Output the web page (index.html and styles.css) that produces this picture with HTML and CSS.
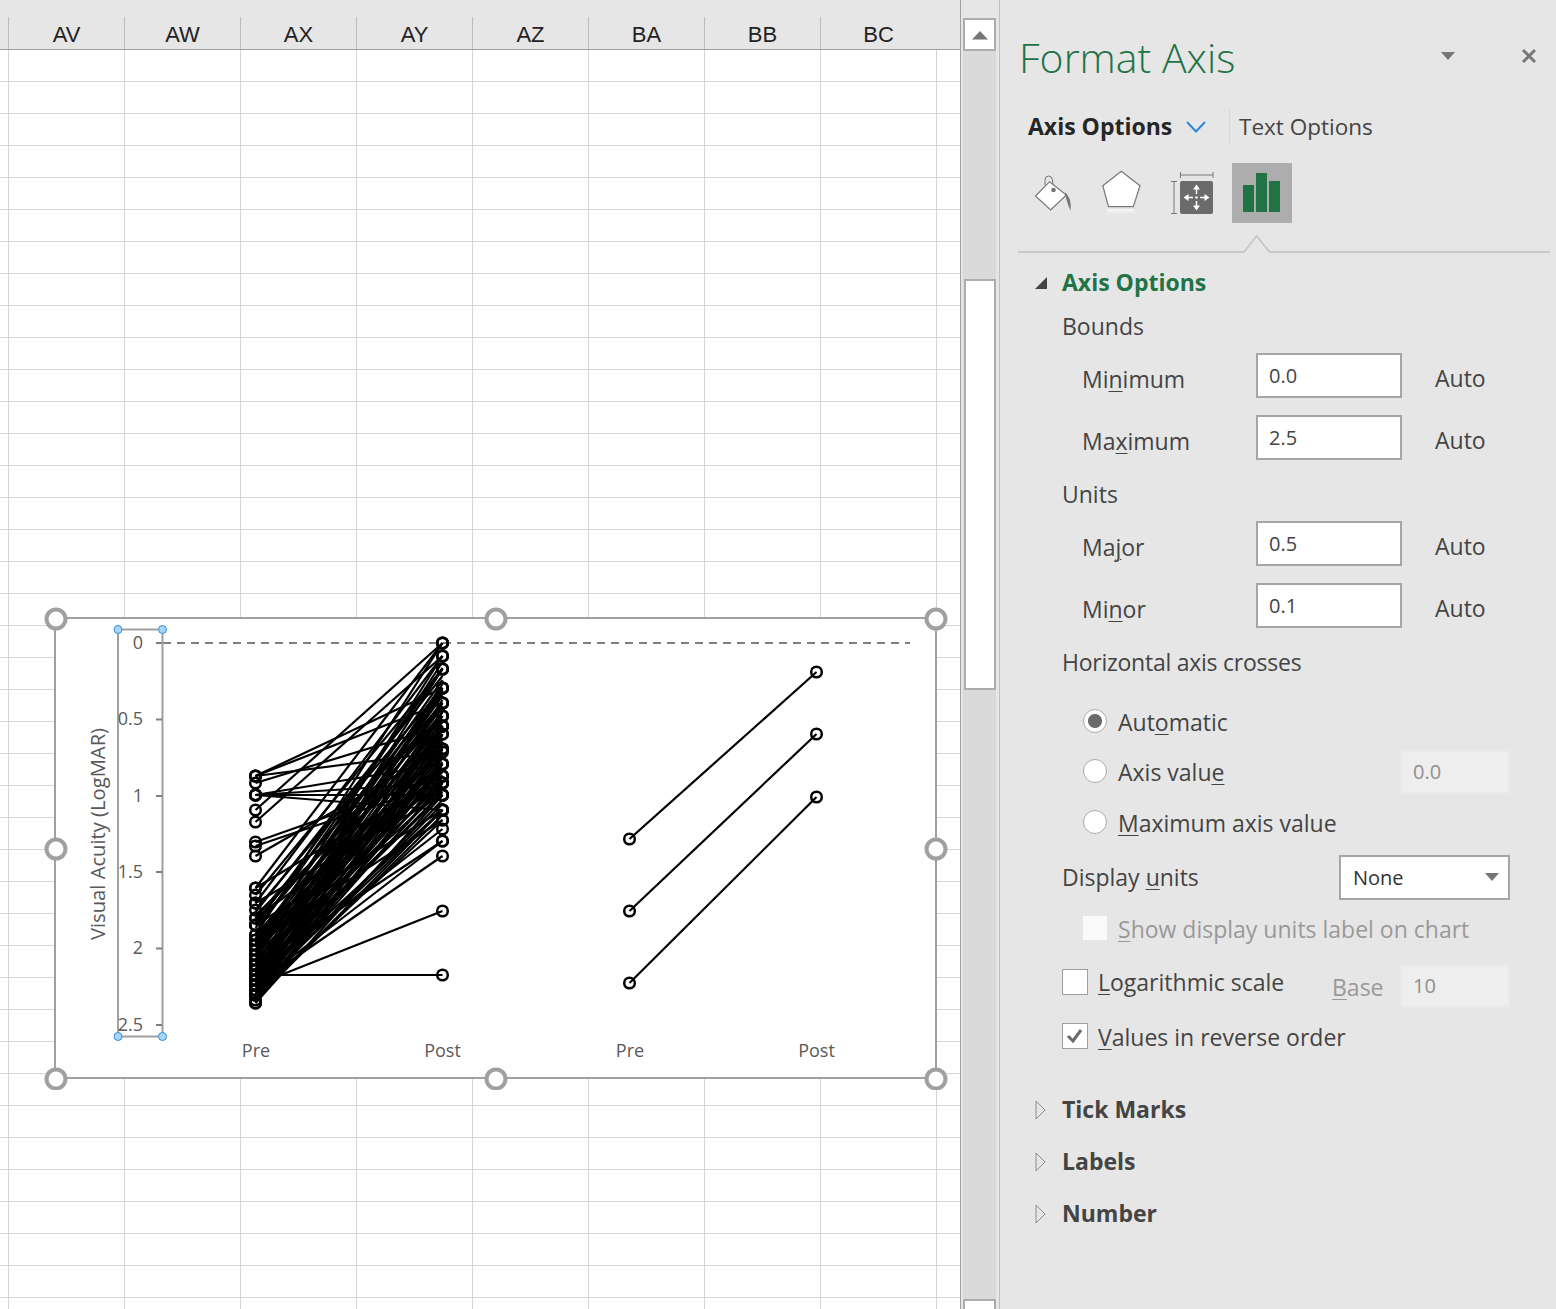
FILE: index.html
```html
<!DOCTYPE html>
<html lang="en">
<head>
<meta charset="utf-8">
<title>Format Axis</title>
<link rel="stylesheet" href="styles.css">
</head>
<body>
<main class="sheet">
  <div class="colhead">
    <div class="col">AV</div><div class="col">AW</div><div class="col">AX</div><div class="col">AY</div><div class="col">AZ</div><div class="col">BA</div><div class="col">BB</div><div class="col">BC</div>
  </div>
  <div class="cells"></div>
  <svg class="chart" width="920" height="490" viewBox="40 600 920 490">
    <defs>
      <marker id="dot" viewBox="0 0 16 16" refX="8" refY="8" markerWidth="16" markerHeight="16" markerUnits="userSpaceOnUse"><circle cx="8" cy="8" r="5.300" fill="none" stroke="#000" stroke-width="2.500"/></marker>
    </defs>
    <rect class="frame" x="55" y="618" width="881" height="460"/>
    <path class="gridline" d="M163 643H910"/>
    <path class="axisbox" d="M118 1036.500V629.500H162.500V1036.500H118"/>
    <path class="ticks" d="M156 643h6M156 719.500h6M156 796h6M156 872h6M156 948.500h6M156 1025h6"/>
    <text class="tick" x="143" y="649">0</text>
    <text class="tick" x="143" y="725">0.5</text>
    <text class="tick" x="143" y="802">1</text>
    <text class="tick" x="143" y="878">1.5</text>
    <text class="tick" x="143" y="954">2</text>
    <text class="tick" x="143" y="1031">2.5</text>
    <text class="axistitle" transform="translate(105 834) rotate(-90)">Visual Acuity (LogMAR)</text>
    <text class="cat" x="256" y="1057">Pre</text>
    <text class="cat" x="442.500" y="1057">Post</text>
    <text class="cat" x="630" y="1057">Pre</text>
    <text class="cat" x="816.500" y="1057">Post</text>
    <g class="series">
      <path d="M255.500 912L442.500 676"/><path d="M255.500 922L442.500 694"/><path d="M255.500 928L442.500 708"/><path d="M255.500 933L442.500 668"/><path d="M255.500 938L442.500 712"/><path d="M255.500 943L442.500 680"/><path d="M255.500 946L442.500 722"/><path d="M255.500 952L442.500 696"/><path d="M255.500 954L442.500 742"/><path d="M255.500 957L442.500 684"/><path d="M255.500 962L442.500 730"/><path d="M255.500 963L442.500 706"/><path d="M255.500 966L442.500 756"/><path d="M255.500 969L442.500 690"/><path d="M255.500 972L442.500 744"/><path d="M255.500 974L442.500 712"/><path d="M255.500 977L442.500 770"/><path d="M255.500 979L442.500 700"/><path d="M255.500 982L442.500 738"/><path d="M255.500 984L442.500 720"/><path d="M255.500 986L442.500 786"/><path d="M255.500 987L442.500 730"/><path d="M255.500 989L442.500 758"/><path d="M255.500 992L442.500 742"/><path d="M255.500 993L442.500 800"/><path d="M255.500 996L442.500 768"/><path d="M255.500 997L442.500 735"/><path d="M255.500 1001L442.500 752"/><path d="M255.500 936L442.500 762"/><path d="M255.500 942L442.500 748"/><path d="M255.500 951L442.500 768"/><path d="M255.500 959L442.500 790"/><path d="M255.500 964L442.500 772"/><path d="M255.500 973L442.500 780"/><path d="M255.500 981L442.500 792"/><path d="M255.500 991L442.500 804"/><path d="M255.500 999L442.500 815"/><path d="M255.500 915L442.500 740"/><path d="M255.500 947L442.500 662"/><path d="M255.500 983L442.500 690"/>
    </g>
    <g class="series" marker-start="url(#dot)" marker-end="url(#dot)">
      <path d="M629.500 839L816.500 672"/><path d="M629.500 911L816.500 734"/><path d="M629.500 983L816.500 797"/>
      <path d="M255.500 776L442.500 688"/><path d="M255.500 776L442.500 703"/><path d="M255.500 783L442.500 726"/><path d="M255.500 776L442.500 752"/><path d="M255.500 795L442.500 783"/><path d="M255.500 795L442.500 795"/><path d="M255.500 795L442.500 764"/><path d="M255.500 795L442.500 810"/><path d="M255.500 810L442.500 643"/><path d="M255.500 822L442.500 656"/><path d="M255.500 842L442.500 776"/><path d="M255.500 846L442.500 783"/><path d="M255.500 856L442.500 749"/>
      <path d="M255.500 888L442.500 643"/><path d="M255.500 888L442.500 776"/><path d="M255.500 895L442.500 669"/><path d="M255.500 903L442.500 656"/><path d="M255.500 903L442.500 795"/><path d="M255.500 910L442.500 688"/><path d="M255.500 918L442.500 703"/><path d="M255.500 918L442.500 783"/><path d="M255.500 925L442.500 716"/><path d="M255.500 925L442.500 669"/><path d="M255.500 925L442.500 810"/><path d="M255.500 935L442.500 643"/><path d="M255.500 935L442.500 726"/><path d="M255.500 940L442.500 688"/><path d="M255.500 940L442.500 820"/><path d="M255.500 945L442.500 703"/><path d="M255.500 945L442.500 764"/><path d="M255.500 950L442.500 656"/><path d="M255.500 950L442.500 734"/><path d="M255.500 955L442.500 716"/><path d="M255.500 955L442.500 776"/><path d="M255.500 960L442.500 669"/><path d="M255.500 960L442.500 749"/><path d="M255.500 965L442.500 688"/><path d="M255.500 965L442.500 783"/><path d="M255.500 965L442.500 841"/><path d="M255.500 970L442.500 703"/><path d="M255.500 970L442.500 726"/><path d="M255.500 970L442.500 795"/><path d="M255.500 975L442.500 734"/><path d="M255.500 975L442.500 795"/><path d="M255.500 975L442.500 975"/><path d="M255.500 975L442.500 829"/><path d="M255.500 980L442.500 716"/><path d="M255.500 980L442.500 764"/><path d="M255.500 980L442.500 810"/><path d="M255.500 985L442.500 911"/><path d="M255.500 985L442.500 749"/><path d="M255.500 985L442.500 856"/><path d="M255.500 985L442.500 841"/><path d="M255.500 990L442.500 776"/><path d="M255.500 990L442.500 810"/><path d="M255.500 990L442.500 726"/><path d="M255.500 995L442.500 783"/><path d="M255.500 995L442.500 820"/><path d="M255.500 995L442.500 749"/><path d="M255.500 1003L442.500 795"/><path d="M255.500 1003L442.500 764"/><path d="M255.500 1000L442.500 810"/>
    </g>
    <g class="handles">
      <circle cx="56" cy="619" r="9.500"/><circle cx="496" cy="619" r="9.500"/><circle cx="936" cy="619" r="9.500"/>
      <circle cx="56" cy="849" r="9.500"/><circle cx="936" cy="849" r="9.500"/>
      <circle cx="56" cy="1079" r="9.500"/><circle cx="496" cy="1079" r="9.500"/><circle cx="936" cy="1079" r="9.500"/>
    </g>
    <g class="miniHandles">
      <circle cx="118" cy="629.500" r="4"/><circle cx="162.500" cy="629.500" r="4"/><circle cx="118" cy="1036.500" r="4"/><circle cx="162.500" cy="1036.500" r="4"/>
    </g>
  </svg>
</main>

<div class="scrollbar">
  <div class="sb-btn"><svg width="16" height="9" viewBox="0 0 16 9"><path class="fill-gray" d="M8 0L16 8.500H0Z"/></svg></div>
  <div class="sb-thumb"></div>
  <div class="sb-stub"></div>
</div>

<aside class="panel">
  <header class="title-row">
    <h1 class="title">Format Axis</h1>
    <svg class="pane-caret" width="14" height="8" viewBox="0 0 14 8"><path class="fill-gray" d="M0 0H14L7 8Z"/></svg>
    <svg class="pane-close" width="16" height="16" viewBox="0 0 16 16"><path d="M2 2L14 14M14 2L2 14"/></svg>
  </header>

  <nav class="tabs">
    <span class="tab-active">Axis Options</span>
    <svg class="chevron" width="20" height="12" viewBox="0 0 20 12"><path d="M1 1L10 10.500L19 1"/></svg>
    <span class="tab-sep"></span>
    <span class="tab">Text Options</span>
  </nav>

  <div class="icons">
    <svg class="icon-cell" width="60" height="60" viewBox="1020 163 60 60">
      <path class="ic-handle" d="M1045 185V180Q1045 176 1048.500 176Q1052 176 1052.500 180L1053.500 190"/>
      <path class="ic-shape" d="M1035.500 196L1049.600 181.700L1066.300 195L1050.700 210Z"/>
      <circle class="fill-gray" cx="1053.500" cy="190" r="2.300"/>
      <path class="fill-gray" d="M1065 192Q1072 198 1070.500 211Q1068 205 1066 198Z"/>
    </svg>
    <svg class="icon-cell" width="67" height="60" viewBox="1080 163 67 60">
      <defs><linearGradient id="fade" x1="0" y1="0" x2="0" y2="1"><stop offset="0" stop-color="#d0d0d0"/><stop offset="0.300" stop-color="#f6f6f6"/><stop offset="1" stop-color="#e6e6e6"/></linearGradient></defs>
      <path class="ic-shape" d="M1121.300 171.300L1140 185.700L1133.300 206.700H1108.500L1102.800 185.700Z"/>
      <path class="ic-fade" fill="url(#fade)" d="M1108.500 207.500H1133.300L1136 214H1106Z"/>
    </svg>
    <svg class="icon-cell" width="85" height="60" viewBox="1147 163 85 60">
      <path class="ic-dim" d="M1180.500 172V178M1180.500 175H1213M1213 172V178M1171 181.500H1177M1174 181.500V213.500M1171 213.500H1177"/>
      <rect class="fill-dark" x="1180" y="181" width="33" height="33" rx="2"/>
      <path class="ic-arrows" d="M1196.500 188V194M1196.500 201V207M1187 197.500H1193M1200 197.500H1206"/>
      <circle class="fill-white" cx="1196.500" cy="197.500" r="1.300"/>
      <path class="fill-white" d="M1196.500 184.500L1200 189.500H1193ZM1196.500 210.500L1200 205.500H1193ZM1183.500 197.500L1188.500 194V201ZM1209.500 197.500L1204.500 194V201Z"/>
    </svg>
    <div class="icon-on">
      <svg width="60" height="60" viewBox="1232 163 60 60"><path class="fill-green" d="M1243 185H1254V212H1243ZM1256 173H1267V212H1256ZM1269 181H1280V212H1269Z"/></svg>
    </div>
  </div>

  <svg class="divider" width="556" height="20" viewBox="1000 235 556 20"><path d="M1018 252H1244L1256.700 236L1269.500 252H1550"/></svg>

  <div class="section sec-first">
    <svg class="tri" width="14" height="14" viewBox="0 0 14 14"><path class="fill-tri" d="M1 13L13 1V13Z"/></svg>
    <span class="sec-open">Axis Options</span>
  </div>

  <div class="lbl mt12">Bounds</div>
  <div class="field mt10"><span class="fname">Mi<u>n</u>imum</span><span class="inp">0.0</span><span class="auto">Auto</span></div>
  <div class="field mt17"><span class="fname">Ma<u>x</u>imum</span><span class="inp">2.5</span><span class="auto">Auto</span></div>

  <div class="lbl mt19">Units</div>
  <div class="field mt10"><span class="fname">Ma<u>j</u>or</span><span class="inp">0.5</span><span class="auto">Auto</span></div>
  <div class="field mt17"><span class="fname">Mi<u>n</u>or</span><span class="inp">0.1</span><span class="auto">Auto</span></div>

  <div class="lbl lbl-tight mt19">Horizontal axis crosses</div>

  <div class="opt mt23"><span class="radio radio-on"></span><span class="opt-text">Aut<u>o</u>matic</span></div>
  <div class="opt opt-tall mt8"><span class="radio"></span><span class="opt-text">Axis valu<u>e</u></span><span class="inp-off push">0.0</span></div>
  <div class="opt mt9"><span class="radio"></span><span class="opt-text"><u>M</u>aximum axis value</span></div>

  <div class="duo mt12"><span class="duo-label">Display <u>u</u>nits</span>
    <span class="select">None<svg width="14" height="8" viewBox="0 0 14 8"><path class="fill-gray" d="M0 0H14L7 8Z"/></svg></span>
  </div>

  <div class="opt mt10"><span class="check-off"></span><span class="opt-text muted"><u>S</u>how display units label on chart</span></div>

  <div class="chk chk-tall mt15"><span class="check"></span><span class="chk-text"><u>L</u>ogarithmic scale</span><span class="base"><u>B</u>ase</span><span class="inp-off">10</span></div>
  <div class="chk mt9"><span class="check"><svg width="24" height="24" viewBox="0 0 24 24"><path d="M5 12L10 17L18 6"/></svg></span><span class="chk-text"><u>V</u>alues in reverse order</span></div>

  <div class="section mt37"><svg class="tri" width="14" height="20" viewBox="0 0 14 20"><path class="tri-closed" d="M2 1V19L11 10Z"/></svg><span class="sec-closed">Tick Marks</span></div>
  <div class="section mt20"><svg class="tri" width="14" height="20" viewBox="0 0 14 20"><path class="tri-closed" d="M2 1V19L11 10Z"/></svg><span class="sec-closed">Labels</span></div>
  <div class="section mt20"><svg class="tri" width="14" height="20" viewBox="0 0 14 20"><path class="tri-closed" d="M2 1V19L11 10Z"/></svg><span class="sec-closed">Number</span></div>
</aside>
</body>
</html>
```

FILE: styles.css
```css
* { box-sizing: border-box; }
html, body { margin: 0; height: 100%; }
body {
  width: 1556px; height: 1309px; overflow: hidden;
  display: flex; background: #e6e6e6;
  font-family: "Open Sans", "Noto Sans", sans-serif; color: #444;
}
u { text-underline-offset: 3px; text-decoration-thickness: 1px; }

/* sheet */
.sheet { position: relative; flex: none; width: 961px; height: 100%; display: flex; flex-direction: column; border-right: 1px solid #a0a0a0; }
.colhead { flex: none; height: 50px; display: flex; padding-left: 8px; border-bottom: 1px solid #a0a0a0; background: #e6e6e6; }
.col {
  width: 116px; margin-top: 17px; height: 32px; border-left: 1px solid #bdbdbd;
  font: 22px/36px "Liberation Sans", sans-serif; color: #222; text-align: center;
}
.cells {
  flex: 1; background-color: #fff;
  background-image: linear-gradient(to right, #d4d4d4 1px, transparent 1px), linear-gradient(to bottom, #d4d4d4 1px, transparent 1px);
  background-size: 116px 32px;
  background-position: 8px 31px;
}
.chart { position: absolute; left: 40px; top: 600px; }
.frame { fill: #fff; stroke: #a0a0a0; stroke-width: 2; }
.gridline { fill: none; stroke: #808080; stroke-width: 2; stroke-dasharray: 8 6; }
.axisbox { fill: none; stroke: #a0a0a0; stroke-width: 2; }
.ticks { fill: none; stroke: #808080; stroke-width: 2; }
.tick { font: 18px "Open Sans", sans-serif; fill: #595959; text-anchor: end; }
.axistitle { font: 20.200px "Open Sans", sans-serif; fill: #595959; text-anchor: middle; }
.cat { font: 18px "Open Sans", sans-serif; fill: #595959; text-anchor: middle; }
.series path { fill: none; stroke: #000; stroke-width: 2.200; }
.handles circle { fill: #fff; stroke: #a0a0a0; stroke-width: 4; }
.miniHandles circle { fill: #a8d4f5; stroke: #2e8fd8; stroke-width: 1; }

/* scrollbar */
.scrollbar { flex: none; width: 39px; height: 100%; display: flex; flex-direction: column; padding: 18px 3px 0 2px; border-right: 1px solid #c0c0c0; position: relative; }
.scrollbar::before { content: ""; position: absolute; left: 2px; width: 33px; top: 50px; bottom: 0; background: #dadada; }
.sb-btn, .sb-thumb, .sb-stub { flex: none; position: relative; background: #fff; border: 2px solid #adadad; }
.sb-btn { height: 33px; display: flex; align-items: center; justify-content: center; }
.sb-btn svg { margin-top: 1px; }
.sb-thumb { margin: 228px 0 0 1px; height: 411px; }
.sb-stub { margin-top: 609px; height: 30px; }

/* panel */
.panel { flex: 1; min-width: 0; padding: 30px 0 0 0; }
.title-row { height: 56px; display: flex; align-items: center; padding-left: 19px; }
.title { margin: 0 0 2px; font: 300 41px/56px "Open Sans", sans-serif; color: #217346; width: 422px; }
.pane-caret { margin-top: -4px; }
.pane-close { margin: -4px 0 0 66px; }
.pane-close path { stroke: #767676; stroke-width: 3; fill: none; }
.fill-gray { fill: #767676; }
.fill-dark { fill: #6b6b6b; }
.fill-white { fill: #fff; }
.fill-green { fill: #217346; }
.fill-tri { fill: #444; }

.tabs { height: 40px; margin-top: 20px; padding-left: 28px; display: flex; align-items: center; }
.tab-active { width: 144px; font-size: 23px; font-weight: 700; color: #262626; white-space: nowrap; }
.chevron { margin: 2px 0 0 14px; }
.chevron path { fill: none; stroke: #2b88d8; stroke-width: 2; }
.tab-sep { width: 1px; height: 36px; background: #d8d8d8; margin: 2px 9px 0 23px; }
.tab { color: #444; font-size: 22.500px; }

.icons { height: 60px; margin-top: 17px; padding-left: 20px; display: flex; }
.icon-cell { display: block; flex: none; }
.icon-on { width: 60px; height: 60px; background: #adadad; }
.icon-on svg { display: block; }
.ic-shape { fill: #fff; stroke: #767676; stroke-width: 1.200; }
.ic-handle { fill: none; stroke: #767676; stroke-width: 1; }
.ic-dim { fill: none; stroke: #767676; stroke-width: 1; }
.ic-arrows { fill: none; stroke: #fff; stroke-width: 1.500; }

.divider { display: block; margin-top: 12px; }
.divider path { fill: none; stroke: #c8c8c8; stroke-width: 2; }

.section { height: 32px; display: flex; align-items: center; padding-left: 34px; font-size: 23px; font-weight: 700; }
.section span { margin-bottom: 2px; }
.sec-first { margin-top: 12px; }
.tri { flex: none; margin-right: 14px; }
.sec-open { color: #217346; }
.sec-closed { color: #444; }
.tri-closed { fill: none; stroke: #8c8c8c; stroke-width: 1; }

.lbl { height: 32px; line-height: 30px; padding-left: 62px; font-size: 23px; }
.lbl-tight { letter-spacing: -0.250px; }
.field { height: 45px; display: flex; align-items: center; padding-left: 82px; font-size: 23px; }
.fname { width: 174px; padding-top: 7px; }
.inp { width: 146px; height: 45px; border: 2px solid #a6a6a6; background: #fff; padding-left: 11px; line-height: 41px; font-size: 20px; }
.auto { margin-left: 33px; padding-top: 5px; }

.opt { height: 40px; display: flex; align-items: center; padding-left: 83px; font-size: 23px; }
.opt-tall { height: 44px; }
.radio { flex: none; width: 24px; height: 24px; border-radius: 50%; background: #fff; border: 1px solid #ababab; margin-top: -2px; }
.radio-on { background: radial-gradient(circle, #6b6b6b 0 6.500px, #fff 7.500px); }
.opt-text { margin-left: 11px; }
.inp-off { flex: none; width: 110px; height: 44px; background: #eee; border: 2px solid #e9e9e9; padding-left: 11px; line-height: 40px; font-size: 20px; color: #8f8f8f; }
.push { margin-left: auto; margin-right: 46px; }
.duo { height: 44px; display: flex; align-items: center; padding-left: 62px; font-size: 23px; }
.duo-label { width: 277px; }
.select { width: 171px; height: 45px; border: 2px solid #a6a6a6; background: #fff; padding: 0 9px 0 12px; display: flex; align-items: center; justify-content: space-between; font-size: 20px; color: #333; }
.check-off { flex: none; width: 24px; height: 24px; background: #fafafa; margin-top: -2px; }
.muted { color: #999; }
.chk { height: 40px; display: flex; align-items: center; padding-left: 62px; font-size: 23px; }
.chk-tall { height: 44px; }
.check { flex: none; width: 26px; height: 26px; background: #fff; border: 1px solid #a0a0a0; margin-bottom: 2px; }
.chk-tall .check { margin-bottom: 9px; }
.check svg { display: block; }
.check path { fill: none; stroke: #6b6b6b; stroke-width: 3; }
.chk-text { margin-left: 10px; }
.chk-tall .chk-text { width: 234px; margin-bottom: 9px; }
.base { width: 68px; color: #999; padding-top: 2px; }

.mt8 { margin-top: 8px; } .mt9 { margin-top: 9px; } .mt10 { margin-top: 10px; } .mt12 { margin-top: 12px; }
.mt15 { margin-top: 15px; } .mt17 { margin-top: 17px; } .mt19 { margin-top: 19px; } .mt20 { margin-top: 20px; } .mt23 { margin-top: 23px; } .mt37 { margin-top: 37px; }
```
